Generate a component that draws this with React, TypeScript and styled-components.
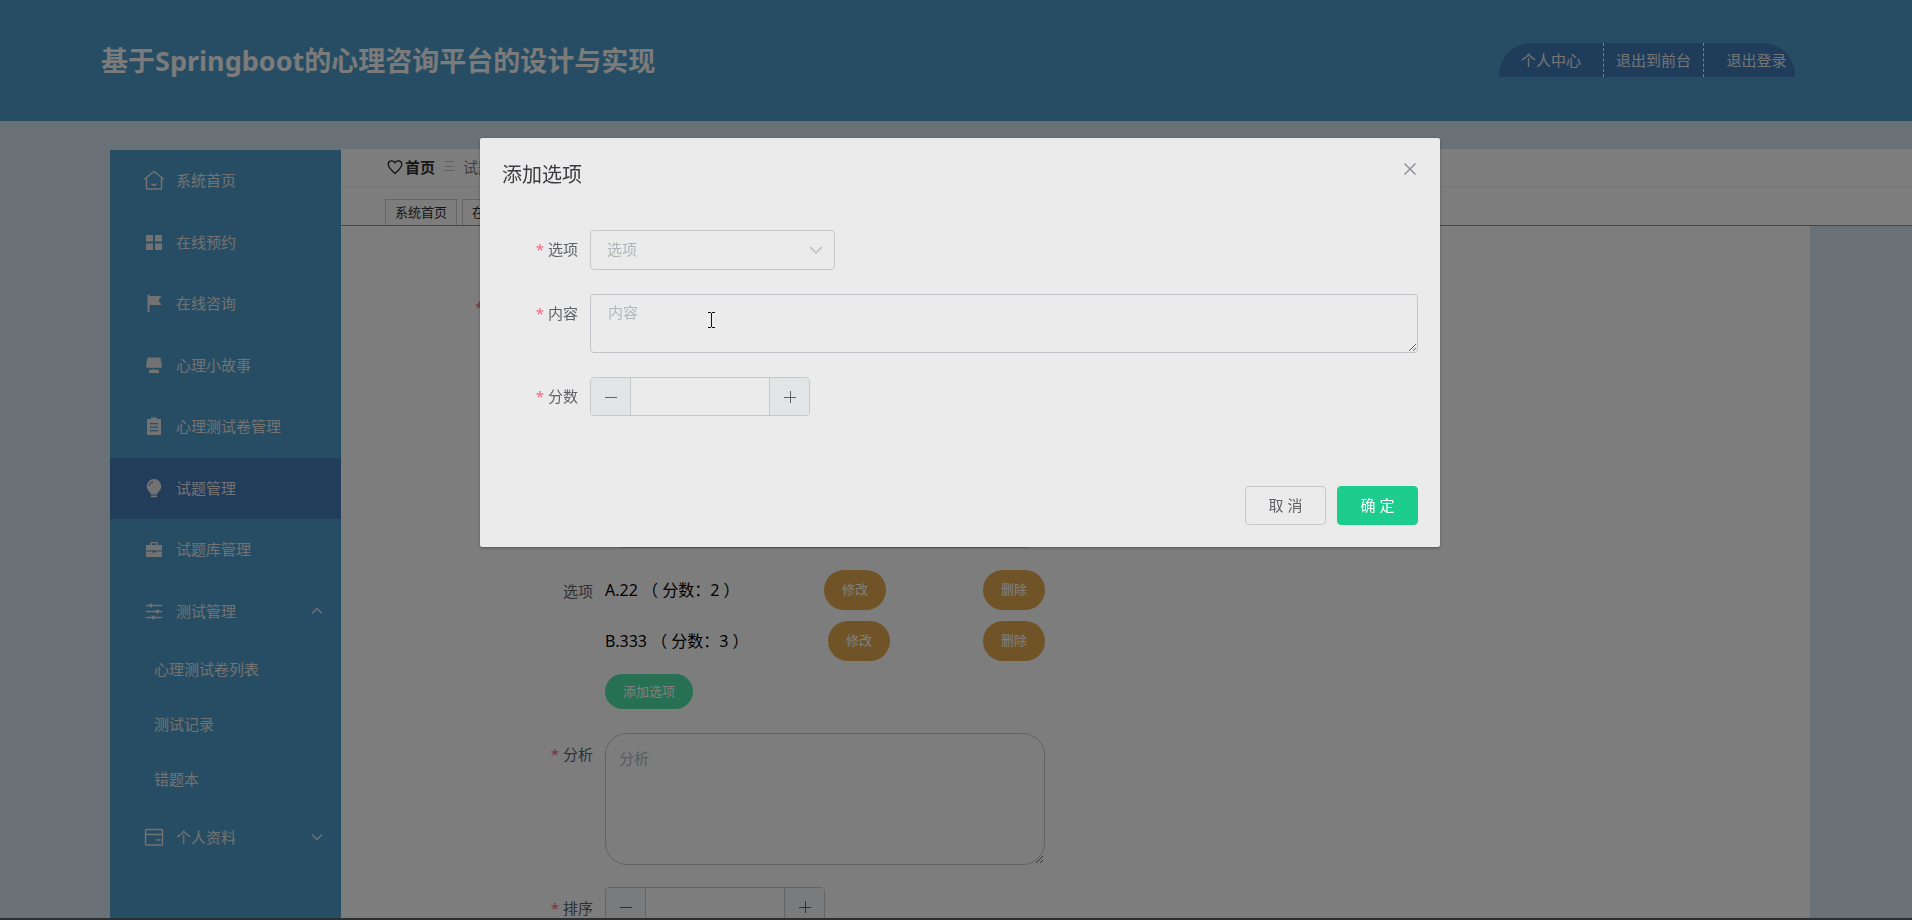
import React from 'react';
import styled, { createGlobalStyle } from 'styled-components';

const Global = createGlobalStyle`
  * { box-sizing: border-box; }
  html, body, #root { height: 100%; }
  body {
    margin: 0;
    overflow: hidden;
    background: #d3e0ec;
    color: #000;
    font: 15px/20px "Noto Sans", "Noto Sans CJK SC", sans-serif;
  }
  button, input, textarea, select { font: inherit; margin: 0; }
  ul { list-style: none; margin: 0; padding: 0; }
  a { color: inherit; text-decoration: none; }
`;

const Page = styled.div`
  height: 100%;
  display: flex;
  flex-direction: column;
  overflow: hidden;
`;

const Header = styled.header`
  flex: none;
  height: 121px;
  padding: 0 117px 2px 101px;
  display: flex;
  align-items: center;
  justify-content: space-between;
  background: #4c9ac6;
`;

const SiteTitle = styled.h1`
  margin: 0;
  padding-top: 2px;
  font-size: 27px;
  line-height: 40px;
  font-weight: 700;
  color: #f6f6f6;
`;

const UserNav = styled.nav`
  display: flex;
  height: 34px;
  border-radius: 32px 32px 0 0;
  background: #3f7ab5;
  color: #e8e8e8;
`;

const UserLink = styled.a<{ $width: number; $last?: boolean }>`
  width: ${p => p.$width}px;
  padding-left: ${p => (p.$last ? 14 : 0)}px;
  line-height: 34px;
  text-align: center;
  border-right: ${p => (p.$last ? 'none' : '1px dashed #fff')};
`;

const Body = styled.div`
  flex: 1;
  min-height: 0;
  display: flex;
  padding: 28px 0 0 110px;
`;

const Sidebar = styled.nav`
  flex: none;
  width: 231px;
  margin-top: 1px;
  background: #4c9ac6;
  color: #e4e4e4;
`;

const MenuItem = styled.li`
  &:nth-child(odd) { padding-bottom: 1px; }
`;

const MenuLink = styled.a<{ $active?: boolean }>`
  display: flex;
  align-items: center;
  gap: 12px;
  height: 61px;
  padding: 0 18px 2px 34px;
  background: ${p => (p.$active ? '#4478b6' : 'transparent')};

  svg { flex: none; }
  span { flex: 1; }
`;

const SubLink = styled.a`
  display: flex;
  align-items: center;
  height: 55px;
  padding: 0 0 2px 44px;
`;

const Main = styled.main`
  flex: 1;
  min-width: 0;
  display: flex;
  flex-direction: column;
`;

const Crumbs = styled.div`
  flex: none;
  height: 38px;
  padding: 0 46px 2px;
  display: flex;
  align-items: center;
  gap: 2px;
  background: #fafafa;
  border-bottom: 1px solid #ececec;
  color: #808080;

  b { color: #303133; }
  i { font-style: normal; color: #c0c4cc; margin: 0 6px; font-size: 12px; }
`;

const Tabs = styled.div`
  flex: none;
  height: 39px;
  padding: 0 44px;
  display: flex;
  align-items: flex-end;
  gap: 5px;
  background: #fafafa;
  border-bottom: 1px solid #8a9094;
`;

const Tab = styled.a`
  height: 26px;
  padding: 0 9px;
  border: 1px solid #c6cacd;
  border-bottom: none;
  font-size: 13px;
  line-height: 25px;
  color: #303133;
`;

const Content = styled.form`
  flex: 1;
  min-height: 0;
  margin-right: 102px;
  padding: 60px 0 0 134px;
  background: #fafafa;
  overflow: hidden;
`;

const Field = styled.div<{ $gap?: number }>`
  display: flex;
  width: 570px;
  margin-bottom: ${p => p.$gap ?? 22}px;
`;

const Label = styled.label<{ $w?: number }>`
  flex: none;
  width: ${p => p.$w ?? 130}px;
  padding-right: 12px;
  line-height: 38px;
  text-align: right;
  white-space: nowrap;
  color: #606266;

  ${Field} & { padding-top: 2px; }
`;

const Star = styled.span`
  margin-right: 4px;
  color: #f0687a;
`;

const RoundInput = styled.input`
  width: 440px;
  height: 40px;
  border: 1px solid #c8cbd0;
  border-radius: 20px;
  background: transparent;
  padding: 0 14px;
`;

const RoundArea = styled.textarea<{ $h: number }>`
  display: block;
  width: 440px;
  height: ${p => p.$h}px;
  padding: 14px 13px;
  border: 1px solid #c2c5ca;
  border-radius: 22px;
  background: transparent;
  resize: both;
  &::placeholder { color: #b4b6ba; }
`;

const OptionList = styled.div`
  width: 440px;
`;

const OptionRow = styled.div`
  display: flex;
  align-items: center;
  height: 40px;
  margin-bottom: 11px;
`;

const OptionText = styled.span<{ $w: number }>`
  width: ${p => p.$w}px;
  font-size: 16px;
  white-space: pre;
`;

const Pill = styled.button<{ $green?: boolean; $push?: boolean }>`
  height: ${p => (p.$green ? 35 : 40)}px;
  width: ${p => (p.$green ? 88 : 62)}px;
  margin-top: ${p => (p.$green ? 2 : 0)}px;
  margin-left: ${p => (p.$push ? 'auto' : '0')};
  padding: 0 0 2px;
  border: none;
  border-radius: 20px;
  background: ${p => (p.$green ? '#4fe0a8' : '#e0a850')};
  color: #fff;
  font-size: 13px;
`;

const Stepper = styled.div`
  display: flex;
  width: 220px;
  height: 39px;
  border: 1px solid #c6c9cc;
  border-radius: 4px;
  overflow: hidden;
`;

const StepButton = styled.button<{ $side: 'left' | 'right' }>`
  flex: none;
  width: 40px;
  padding: 0;
  display: grid;
  place-items: center;
  border: none;
  border-${p => (p.$side === 'left' ? 'right' : 'left')}: 1px solid #c6c9cc;
  background: #e1e5e6;
  color: #606266;

  ${Field} & { background: #f3f6f9; }
`;

const StepInput = styled.input`
  flex: 1;
  min-width: 0;
  border: none;
  background: transparent;
  text-align: center;
`;

const Overlay = styled.div`
  position: fixed;
  inset: 0;
  display: flex;
  justify-content: center;
  align-items: flex-start;
  padding: 138px 0 0 8px;
  background: rgba(0, 0, 0, 0.5);
  border-bottom: 2px solid #2b2f31;
`;

const Dialog = styled.section`
  width: 960px;
  border-radius: 2px;
  background: #ebebeb;
  box-shadow: 0 1px 3px rgba(0, 0, 0, 0.3);
`;

const DialogHead = styled.header`
  display: flex;
  justify-content: space-between;
  align-items: flex-start;
  padding: 20px 22px 8px;
  h2 {
    margin: 0;
    font-size: 20px;
    line-height: 34px;
    font-weight: 400;
    color: #3c3d40;
  }
`;

const CloseButton = styled.button`
  padding: 3px 0;
  border: none;
  background: none;
  color: #909399;
  line-height: 0;
`;

const DialogBody = styled.div`
  padding: 30px 22px;
`;

const DialogField = styled.div<{ $gap: number }>`
  display: flex;
  margin-bottom: ${p => p.$gap}px;
`;

const SelectBox = styled.div`
  display: grid;
  align-items: center;
  width: 245px;
  height: 40px;
  > * { grid-area: 1 / 1; }
  svg { justify-self: end; margin-right: 12px; color: #b8bbc0; pointer-events: none; }
`;

const Select = styled.select`
  appearance: none;
  width: 100%;
  height: 40px;
  padding: 0 16px 2px;
  border: 1px solid #c6c9cc;
  border-radius: 4px;
  background: transparent;
  color: #b0b3b8;
`;

const DialogArea = styled.textarea`
  display: block;
  flex: 1;
  height: 59px;
  padding: 7px 17px;
  border: 1px solid #c0c3c7;
  border-radius: 4px;
  background: transparent;
  &::placeholder { color: #b4b7bb; }
`;

const DialogFoot = styled.footer`
  display: flex;
  justify-content: flex-end;
  gap: 11px;
  padding: 10px 22px 22px;
`;

const FootButton = styled.button<{ $primary?: boolean }>`
  width: 81px;
  height: 39px;
  padding: 0 0 2px;
  border: 1px solid ${p => (p.$primary ? '#1ccd8d' : '#c6c9cc')};
  border-radius: 4px;
  background: ${p => (p.$primary ? '#1ccd8d' : 'transparent')};
  color: ${p => (p.$primary ? '#fff' : '#606266')};
`;

const Cursor = styled.svg`
  position: fixed;
  left: 707px;
  top: 311px;
  pointer-events: none;
`;

const icons: Record<string, React.ReactNode> = {
  house: (
    <g fill="none" stroke="currentColor" strokeWidth="1.5" strokeLinejoin="round" strokeLinecap="round">
      <path d="M2.500 7.500V19h15V7.500L10 1.500z M.8 8.800 2.500 7.500 M17.500 7.500l1.700 1.300" />
      <path d="M7.800 14c1 1.300 3.400 1.300 4.400 0" />
    </g>
  ),
  grid: <path d="M2 3h7v6.500H2zM11 3h7v6.500h-7zM2 11.500h7V18H2zM11 11.500h7V18h-7z" />,
  flag: <path d="M3.500 1.500h2V3h12l-3 4.500 3 4.500h-12v7h-2z" />,
  shop: <path d="M3.500 2.500h13L18 11c0 2-2.400 2.600-3.600 1.200-1 1.200-3.200 1.200-4.400 0-1.200 1.200-3.400 1.200-4.400 0C4.400 13.600 2 13 2 11zM5 14.500c1.800.6 3.400.4 5-.5 1.600.9 3.200 1.100 5 .5V18H5z" />,
  order: (
    <path fillRule="evenodd" d="M3 3h4V1.500h6V3h4v16H3zM6 7v1.300h8V7zM6 10.500v1.300h8v-1.300zM6 14v1.300h8V14z" />
  ),
  bulb: (
    <>
      <path d="M10 1a7.200 7.200 0 0 0-4.600 12.700c.9.8 1.300 1.500 1.300 2.800h6.600c0-1.300.4-2 1.300-2.800A7.200 7.200 0 0 0 10 1zM7 17.600h6v1.600H7z" />
      <path d="M5.200 7.500A5 5 0 0 1 9.300 3.600" fill="none" stroke="#4478b6" />
    </>
  ),
  case: (
    <path fillRule="evenodd" d="M6.500 3h7v3H18v5.500H2V6h4.500zM8 4.300V6h4V4.300zM2 12.500h6v1h4v-1h6V18H2z" />
  ),
  sliders: (
    <g stroke="currentColor" strokeWidth="1.500" strokeLinecap="round">
      <path d="M2.500 4.500h15M2.500 10.500h15M2.500 16.500h15" />
      <path d="M7 3.700v1.600M13.500 9.700v1.600M9.500 15.700v1.600" strokeWidth="2.600" />
    </g>
  ),
  card: (
    <g fill="none" stroke="currentColor" strokeWidth="1.400">
      <rect x="1.500" y="2.500" width="17" height="15.500" rx="1" />
      <path d="M1.500 7.500h17M12.500 13h4" />
    </g>
  ),
};

const MenuIcon = ({ name }: { name: string }) => (
  <svg width="20" height="20" viewBox="0 0 20 20" fill="currentColor" aria-hidden="true">
    {icons[name]}
  </svg>
);

const Chevron = ({ up, size = 12 }: { up?: boolean; size?: number }) => (
  <svg width={size} height={size} viewBox="0 0 12 12" fill="none" stroke="currentColor" strokeWidth="1.300" aria-hidden="true">
    <path d={up ? 'M1 8.500 6 3.500l5 5' : 'M1 3.500l5 5 5-5'} />
  </svg>
);

const NumberStepper = ({ id }: { id: string }) => (
  <Stepper>
    <StepButton type="button" $side="left" aria-label="减少">
      <svg width="14" height="14" stroke="currentColor"><path d="M1 7.500h12" /></svg>
    </StepButton>
    <StepInput id={id} type="text" inputMode="numeric" />
    <StepButton type="button" $side="right" aria-label="增加">
      <svg width="14" height="14" stroke="currentColor"><path d="M1 7.500h12M7.500 1v12" /></svg>
    </StepButton>
  </Stepper>
);

const menu = [
  { icon: 'house', text: '系统首页' },
  { icon: 'grid', text: '在线预约' },
  { icon: 'flag', text: '在线咨询' },
  { icon: 'shop', text: '心理小故事' },
  { icon: 'order', text: '心理测试卷管理' },
  { icon: 'bulb', text: '试题管理', active: true },
  { icon: 'case', text: '试题库管理' },
  { icon: 'sliders', text: '测试管理', open: true, children: ['心理测试卷列表', '测试记录', '错题本'] },
  { icon: 'card', text: '个人资料', open: false },
];

const options = [
  { text: 'A.22 （ 分数：2 ）', width: 219 },
  { text: 'B.333 （ 分数：3 ）', width: 223 },
];

export default function App() {
  return (
    <>
      <Global />
      <Page>
        <Header>
          <SiteTitle>基于Springboot的心理咨询平台的设计与实现</SiteTitle>
          <UserNav>
            <UserLink href="#" $width={105}>个人中心</UserLink>
            <UserLink href="#" $width={100}>退出到前台</UserLink>
            <UserLink href="#" $width={91} $last>退出登录</UserLink>
          </UserNav>
        </Header>
        <Body>
          <Sidebar>
            <ul>
              {menu.map(item => (
                <MenuItem key={item.text}>
                  <MenuLink href="#" $active={item.active}>
                    <MenuIcon name={item.icon} />
                    <span>{item.text}</span>
                    {item.open !== undefined && <Chevron up={item.open} />}
                  </MenuLink>
                  {item.children && (
                    <ul>
                      {item.children.map(child => (
                        <li key={child}><SubLink href="#">{child}</SubLink></li>
                      ))}
                    </ul>
                  )}
                </MenuItem>
              ))}
            </ul>
          </Sidebar>
          <Main>
            <Crumbs>
              <svg width="16" height="16" viewBox="0 0 16 16" fill="none" stroke="#303133" strokeWidth="1.400" aria-hidden="true">
                <path d="M8 14.500C4 11 1.200 8.500 1.200 5.300 1.200 1.500 6 .8 8 3.700c2-2.900 6.800-2.200 6.800 1.600C14.800 8.500 12 11 8 14.500z" />
              </svg>
              <b>首页</b>
              <i>三</i>
              <span>试题</span>
            </Crumbs>
            <Tabs>
              <Tab href="#">系统首页</Tab>
              <Tab href="#">在线预约</Tab>
            </Tabs>
            <Content>
              <Field $gap={182}>
                <Label $w={54} htmlFor="paper"><Star>*</Star>试卷</Label>
                <RoundInput id="paper" />
              </Field>
              <Field>
                <Label htmlFor="question">试题</Label>
                <RoundInput id="question" />
              </Field>
              <Field $gap={24}>
                <Label as="span">选项</Label>
                <OptionList>
                  {options.map(option => (
                    <OptionRow key={option.text}>
                      <OptionText $w={option.width}>{option.text}</OptionText>
                      <Pill type="button">修改</Pill>
                      <Pill type="button" $push>删除</Pill>
                    </OptionRow>
                  ))}
                  <Pill type="button" $green>添加选项</Pill>
                </OptionList>
              </Field>
              <Field>
                <Label htmlFor="analysis"><Star>*</Star>分析</Label>
                <RoundArea id="analysis" placeholder="分析" $h={132} />
              </Field>
              <Field>
                <Label htmlFor="order"><Star>*</Star>排序</Label>
                <NumberStepper id="order" />
              </Field>
            </Content>
          </Main>
        </Body>
      </Page>
      <Overlay>
        <Dialog role="dialog" aria-label="添加选项">
          <DialogHead>
            <h2>添加选项</h2>
            <CloseButton type="button" aria-label="关闭">
              <svg width="16" height="16" stroke="currentColor" strokeWidth="1.500"><path d="M2.500 2.500l11 11M13.500 2.500l-11 11" /></svg>
            </CloseButton>
          </DialogHead>
          <DialogBody>
            <DialogField $gap={24}>
              <Label $w={88} htmlFor="option"><Star>*</Star>选项</Label>
              <SelectBox>
                <Select id="option"><option>选项</option></Select>
                <Chevron size={14} />
              </SelectBox>
            </DialogField>
            <DialogField $gap={24}>
              <Label $w={88} htmlFor="text"><Star>*</Star>内容</Label>
              <DialogArea id="text" placeholder="内容" />
            </DialogField>
            <DialogField $gap={30}>
              <Label $w={88} htmlFor="score"><Star>*</Star>分数</Label>
              <NumberStepper id="score" />
            </DialogField>
          </DialogBody>
          <DialogFoot>
            <FootButton type="button">取 消</FootButton>
            <FootButton type="button" $primary>确 定</FootButton>
          </DialogFoot>
        </Dialog>
      </Overlay>
      <Cursor width="9" height="18" viewBox="0 0 9 18" fill="none" stroke="#111" aria-hidden="true">
        <path d="M1 1.500h3M5 1.500h3M4.500 2v14M1 16.500h3M5 16.500h3" />
      </Cursor>
    </>
  );
}
